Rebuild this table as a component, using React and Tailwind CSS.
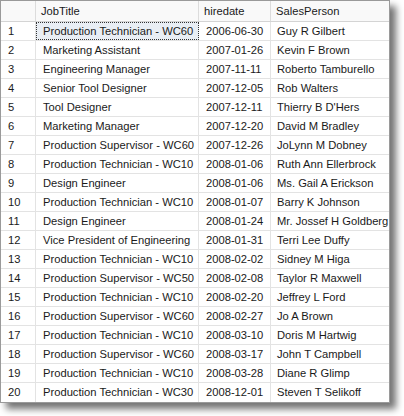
const rows = [
    ['Production Technician - WC60', '2006-06-30', 'Guy R Gilbert'],
    ['Marketing Assistant', '2007-01-26', 'Kevin F Brown'],
    ['Engineering Manager', '2007-11-11', 'Roberto Tamburello'],
    ['Senior Tool Designer', '2007-12-05', 'Rob Walters'],
    ['Tool Designer', '2007-12-11', "Thierry B D'Hers"],
    ['Marketing Manager', '2007-12-20', 'David M Bradley'],
    ['Production Supervisor - WC60', '2007-12-26', 'JoLynn M Dobney'],
    ['Production Technician - WC10', '2008-01-06', 'Ruth Ann Ellerbrock'],
    ['Design Engineer', '2008-01-06', 'Ms. Gail A Erickson'],
    ['Production Technician - WC10', '2008-01-07', 'Barry K Johnson'],
    ['Design Engineer', '2008-01-24', 'Mr. Jossef H Goldberg'],
    ['Vice President of Engineering', '2008-01-31', 'Terri Lee Duffy'],
    ['Production Technician - WC10', '2008-02-02', 'Sidney M Higa'],
    ['Production Supervisor - WC50', '2008-02-08', 'Taylor R Maxwell'],
    ['Production Technician - WC10', '2008-02-20', 'Jeffrey L Ford'],
    ['Production Supervisor - WC60', '2008-02-27', 'Jo A Brown'],
    ['Production Technician - WC10', '2008-03-10', 'Doris M Hartwig'],
    ['Production Supervisor - WC60', '2008-03-17', 'John T Campbell'],
    ['Production Technician - WC10', '2008-03-28', 'Diane R Glimp'],
    ['Production Technician - WC30', '2008-12-01', 'Steven T Selikoff'],
];

const cols = 'grid grid-cols-[35px_163px_72px_118px]';

export default function App() {
    return (
        <div className="w-[404px] h-[416px] bg-white font-['Liberation_Sans',Arial,sans-serif] text-[11.2px] text-[#1a1a1a]">
            <div className="w-[390px] border border-[#9a9a9a] bg-white shadow-[6px_6px_7px_rgba(0,0,0,0.55)]">
                {/* header */}
                <div className={`${cols} h-[21px] bg-[#f9f9f9] border-b border-[#d4d4d4]`}>
                    <div className="border-r border-[#dcdcdc]"></div>
                    <div className="border-r border-[#dcdcdc] pl-[5px] leading-[20px]">JobTitle</div>
                    <div className="border-r border-[#dcdcdc] pl-[5px] leading-[20px]">hiredate</div>
                    <div className="pl-[5px] leading-[20px]">SalesPerson</div>
                </div>

                {rows.map((r, i) => (
                    <div key={i} className={`${cols} h-[19px] border-b border-[#e3e3e3] last:border-b-0`}>
                        <div className="border-r border-[#e3e3e3] pl-[7px] leading-[18px]">{i + 1}</div>
                        {i === 0 ? (
                            <div className="border border-dotted border-[#333] bg-[#e9eef4] pl-[6px] leading-[16px] whitespace-nowrap overflow-hidden">{r[0]}</div>
                        ) : (
                            <div className="border-r border-[#e3e3e3] pl-[7px] leading-[18px] whitespace-nowrap overflow-hidden">{r[0]}</div>
                        )}
                        <div className="border-r border-[#e3e3e3] pl-[7px] leading-[18px]">{r[1]}</div>
                        <div className="pl-[6px] leading-[18px] whitespace-nowrap overflow-hidden">{r[2]}</div>
                    </div>
                ))}
            </div>
        </div>
    );
}
